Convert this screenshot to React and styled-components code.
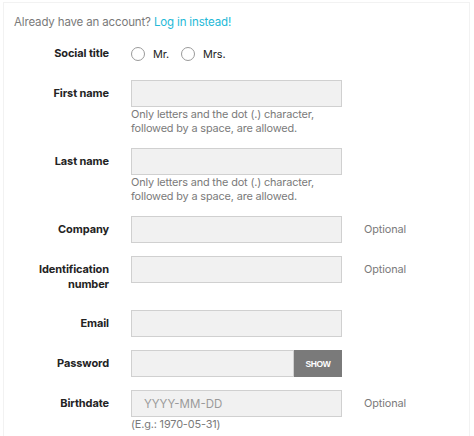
import React from "react";
import styled, { createGlobalStyle } from "styled-components";

const Global = createGlobalStyle`
  html, body { margin: 0; padding: 0; background: #fff; }
  body { font-family: Inter, "Noto Sans", sans-serif; }
  * { box-sizing: border-box; }
`;

const Card = styled.div`
  margin: 2px 4px 0 3px;
  border: 1px solid #f2f2f2;
  border-bottom: none;
  background: #fff;
  padding: 11px 0 0 10px;
  height: 434px;
  overflow: hidden;
`;

const Intro = styled.p`
  margin: 0 0 16px;
  font-size: 11.5px;
  line-height: 16px;
  color: #7a7a7a;
  letter-spacing: -0.15px;
`;

const Link = styled.a`
  color: #24b9d7;
  text-decoration: none;
`;

const Form = styled.div`
  display: flex;
  flex-direction: column;
  gap: 13px;
`;

const Row = styled.div`
  display: grid;
  grid-template-columns: 95px 211px 120px;
  column-gap: 22px;
  align-items: start;
  margin-bottom: ${(p) => p.$extra || 0}px;
`;

const Label = styled.label`
  text-align: right;
  font-weight: 700;
  font-size: 11px;
  line-height: 15px;
  color: #232323;
  padding: ${(p) => (p.$compact ? "0" : "6px 0 5px")};
  letter-spacing: -0.1px;
`;

const Field = styled.div`
  display: flex;
  flex-direction: column;
`;

const InputWrap = styled.div`
  display: flex;
  height: 27px;
`;

const Input = styled.input`
  flex: 1;
  min-width: 0;
  height: 27px;
  background: #f1f1f1;
  border: 1px solid #d0d0d0;
  padding: 0 12px;
  font-family: inherit;
  font-size: 11.5px;
  color: #7a7a7a;
  outline: none;
  &::placeholder { color: #9a9a9a; }
`;

const ShowButton = styled.button`
  width: 48px;
  height: 27px;
  border: none;
  background: #7a7a7a;
  color: #fff;
  font-family: "Liberation Sans", Arial, sans-serif;
  font-weight: 700;
  font-size: 8.5px;
  letter-spacing: -0.4px;
  padding: 0;
`;

const Help = styled.div`
  margin-top: 0;
  font-size: 10.9px;
  line-height: 14px;
  color: #7a7a7a;
  letter-spacing: -0.15px;
`;

const Optional = styled.span`
  font-size: 10.9px;
  line-height: 27px;
  color: #7a7a7a;
  letter-spacing: -0.1px;
`;

const Radios = styled.div`
  display: flex;
  align-items: center;
  gap: 12px;
  height: 15px;
`;

const RadioOption = styled.span`
  display: inline-flex;
  align-items: center;
  gap: 8px;
  font-size: 10.9px;
  color: #232323;
  letter-spacing: -0.1px;
`;

const Circle = styled.span`
  width: 14px;
  height: 14px;
  border-radius: 50%;
  border: 1px solid #9a9a9a;
  background: #fff;
`;

const HELP = (
  <Help>
    Only letters and the dot (.) character,
    <br />
    followed by a space, are allowed.
  </Help>
);

function TextRow({ label, help, optional, placeholder, children }) {
  return (
    <Row>
      <Label>{label}</Label>
      <Field>
        {children || (
          <InputWrap>
            <Input placeholder={placeholder} />
          </InputWrap>
        )}
        {help}
      </Field>
      {optional ? <Optional>Optional</Optional> : <span />}
    </Row>
  );
}

export default function App() {
  return (
    <>
      <Global />
      <Card>
        <Intro>
          Already have an account? <Link href="#">Log in instead!</Link>
        </Intro>
        <Form>
          <Row $extra={6}>
            <Label $compact>Social title</Label>
            <Radios>
              <RadioOption>
                <Circle /> Mr.
              </RadioOption>
              <RadioOption>
                <Circle /> Mrs.
              </RadioOption>
            </Radios>
            <span />
          </Row>
          <TextRow label="First name" help={HELP} />
          <TextRow label="Last name" help={HELP} />
          <TextRow label="Company" optional />
          <TextRow
            label={
              <>
                Identification
                <br />
                number
              </>
            }
            optional
          />
          <TextRow label="Email" />
          <TextRow label="Password">
            <InputWrap>
              <Input type="password" />
              <ShowButton>SHOW</ShowButton>
            </InputWrap>
          </TextRow>
          <TextRow
            label="Birthdate"
            optional
            placeholder="YYYY-MM-DD"
            help={<Help>(E.g.: 1970-05-31)</Help>}
          />
        </Form>
      </Card>
    </>
  );
}
